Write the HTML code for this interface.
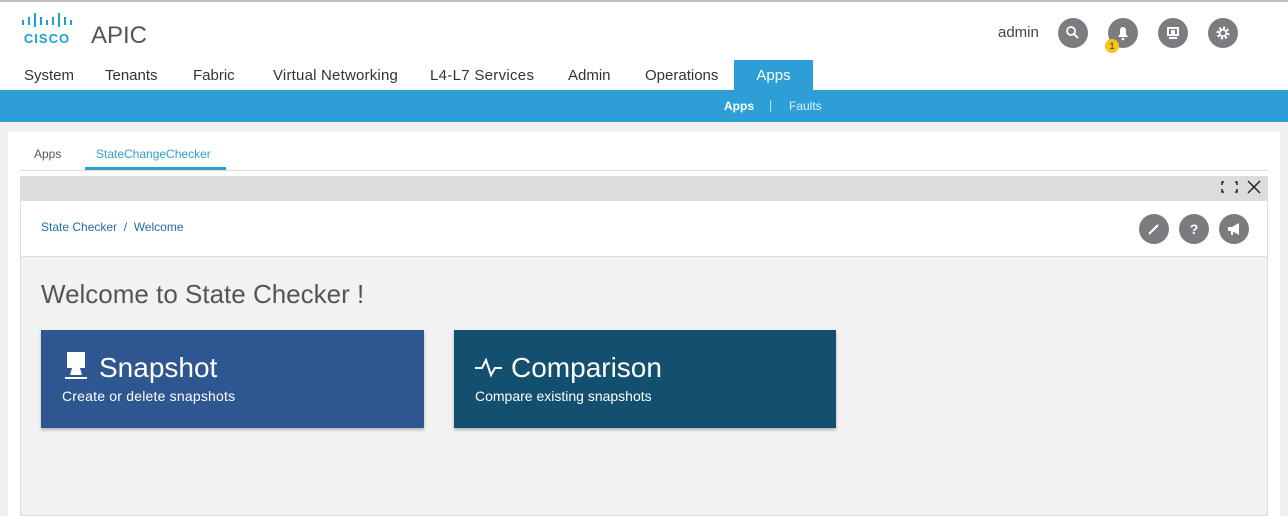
<!DOCTYPE html>
<html><head><style>
*{margin:0;padding:0;box-sizing:border-box}
body{width:1288px;height:516px;overflow:hidden;background:#f0f0f0;font-family:"Liberation Sans",sans-serif;position:relative}
.a{position:absolute}
.circ{position:absolute;width:30px;height:30px;border-radius:50%;background:#7c7c80}
.nav{position:absolute;top:67px;font-size:15px;color:#333}
</style></head><body>
<div class="a" style="left:0;top:0;width:1288px;height:90px;background:#fff;border-top:2px solid #bdbdbd"></div>
<svg class="a" style="left:22px;top:13px" width="50" height="32" viewBox="0 0 50 32">
<g fill="#1ba0d7">
<rect x="0" y="7" width="2" height="5"/><rect x="6" y="4" width="2" height="8"/><rect x="12" y="0" width="2" height="14"/><rect x="18" y="4" width="2" height="8"/><rect x="24" y="7" width="2" height="5"/><rect x="30" y="4" width="2" height="8"/><rect x="36" y="0" width="2" height="14"/><rect x="42" y="4" width="2" height="8"/><rect x="48" y="7" width="2" height="5"/>
</g>
<text x="25" y="30" text-anchor="middle" font-family="Liberation Sans" font-weight="bold" font-size="13" fill="#1ba0d7" letter-spacing="1">CISCO</text>
</svg>
<div class="a" style="left:91px;top:22px;font-size:24px;color:#555">APIC</div>
<div class="a" style="left:998px;top:24px;font-size:15px;color:#444">admin</div>
<div class="circ" style="left:1058px;top:18px"><svg width="30" height="30"><circle cx="13" cy="13" r="4" stroke="#fff" stroke-width="1.8" fill="none"/><path d="M16 16l4 4" stroke="#fff" stroke-width="2"/></svg></div>
<div class="circ" style="left:1108px;top:18px"><svg width="30" height="30"><path d="M10 19h10l-2-3v-4a3 3 0 0 0-6 0v4z" fill="#fff"/><circle cx="15" cy="21" r="1.3" fill="#fff"/></svg></div>
<div class="a" style="left:1105px;top:39px;width:14px;height:14px;border-radius:50%;background:#f5c518;font-size:9px;text-align:center;line-height:14px;color:#333">1</div>
<div class="circ" style="left:1158px;top:18px"><svg width="30" height="30"><rect x="9" y="9" width="12" height="9" fill="#fff"/><rect x="11" y="11" width="8" height="5" fill="#7c7c80"/><rect x="13" y="12" width="4" height="6" fill="#fff"/><rect x="11" y="19" width="8" height="2" fill="#fff"/></svg></div>
<div class="circ" style="left:1208px;top:18px"><svg width="30" height="30"><circle cx="15" cy="15" r="5" stroke="#fff" stroke-width="3" fill="none" stroke-dasharray="2 1.9"/><circle cx="15" cy="15" r="3.3" stroke="#fff" stroke-width="1.6" fill="none"/></svg></div>
<div class="nav" style="left:24px">System</div>
<div class="nav" style="left:105px">Tenants</div>
<div class="nav" style="left:193px">Fabric</div>
<div class="nav" style="left:273px;letter-spacing:0.2px">Virtual Networking</div>
<div class="nav" style="left:430px;letter-spacing:0.3px">L4-L7 Services</div>
<div class="nav" style="left:568px">Admin</div>
<div class="nav" style="left:645px">Operations</div>
<div class="a" style="left:734px;top:60px;width:79px;height:31px;background:#2d9fd6;color:#fff;font-size:15px;text-align:center;line-height:31px">Apps</div>
<div class="a" style="left:0;top:90px;width:1288px;height:32px;background:#2d9fd6"></div>
<div class="a" style="left:724px;top:99px;font-size:12px;color:#fff;font-weight:bold">Apps</div>
<div class="a" style="left:769px;top:98px;font-size:12px;color:#cfe9f7">|</div>
<div class="a" style="left:789px;top:99px;font-size:12px;color:#e3f2fb">Faults</div>
<div class="a" style="left:8px;top:132px;width:1272px;height:384px;background:#fff"></div>
<div class="a" style="left:34px;top:147px;font-size:12px;color:#555">Apps</div>
<div class="a" style="left:96px;top:147px;font-size:12px;color:#2d9fd6">StateChangeChecker</div>
<div class="a" style="left:20px;top:170px;width:1248px;height:1px;background:#ddd"></div>
<div class="a" style="left:85px;top:167px;width:141px;height:3px;background:#2d9fd6"></div>
<div class="a" style="left:20px;top:176px;width:1248px;height:340px;background:#f2f2f2;border:1px solid #ddd"></div>
<div class="a" style="left:21px;top:177px;width:1246px;height:24px;background:#dcdcdc"></div>
<svg class="a" style="left:1221px;top:181px" width="20" height="12"><path d="M3 1H1v3M1 8v3h2M14 1h2v3M16 8v3h-2" stroke="#222" stroke-width="1.5" fill="none"/></svg>
<svg class="a" style="left:1247px;top:180px" width="14" height="14"><path d="M1 1l12 12M13 1L1 13" stroke="#222" stroke-width="1.5"/></svg>
<div class="a" style="left:21px;top:201px;width:1246px;height:56px;background:#fff;border-bottom:1px solid #ddd"></div>
<div class="a" style="left:41px;top:220px;font-size:12px;color:#1f6ea3">State Checker &nbsp;/ &nbsp;Welcome</div>
<div class="circ" style="left:1139px;top:214px"><svg width="30" height="30"><path d="M10 20l9-9" stroke="#fff" stroke-width="2.2"/></svg></div>
<div class="circ" style="left:1179px;top:214px;color:#fff;font-size:14px;font-weight:bold;text-align:center;line-height:30px">?</div>
<div class="circ" style="left:1219px;top:214px"><svg width="30" height="30"><path d="M9 13h4l7-4v12l-7-4h-4z" fill="#fff"/><rect x="12" y="17" width="2" height="4" fill="#fff"/></svg></div>
<div class="a" style="left:41px;top:279px;font-size:26px;color:#555">Welcome to State Checker !</div>
<div class="a" style="left:41px;top:330px;width:383px;height:98px;background:#2e5690;box-shadow:0 2px 3px rgba(0,0,0,.25)"></div>
<svg class="a" style="left:64px;top:352px" width="24" height="30"><rect x="3" y="0" width="18" height="16" rx="1" fill="#fff"/><path d="M8 16h8l2 7H6z" fill="#fff"/><rect x="1" y="25" width="22" height="2" fill="#fff"/></svg>
<div class="a" style="left:99px;top:352px;font-size:28px;color:#fff">Snapshot</div>
<div class="a" style="left:62px;top:388px;font-size:14px;color:#fff;letter-spacing:0.2px">Create or delete snapshots</div>
<div class="a" style="left:454px;top:330px;width:382px;height:98px;background:#134f6f;box-shadow:0 2px 3px rgba(0,0,0,.25)"></div>
<svg class="a" style="left:474px;top:358px" width="30" height="20"><path d="M1 10h7l4-8 5 15 4-7h7" stroke="#fff" stroke-width="2" fill="none"/></svg>
<div class="a" style="left:511px;top:352px;font-size:28px;color:#fff">Comparison</div>
<div class="a" style="left:475px;top:388px;font-size:14px;color:#fff">Compare existing snapshots</div>
</body></html>
